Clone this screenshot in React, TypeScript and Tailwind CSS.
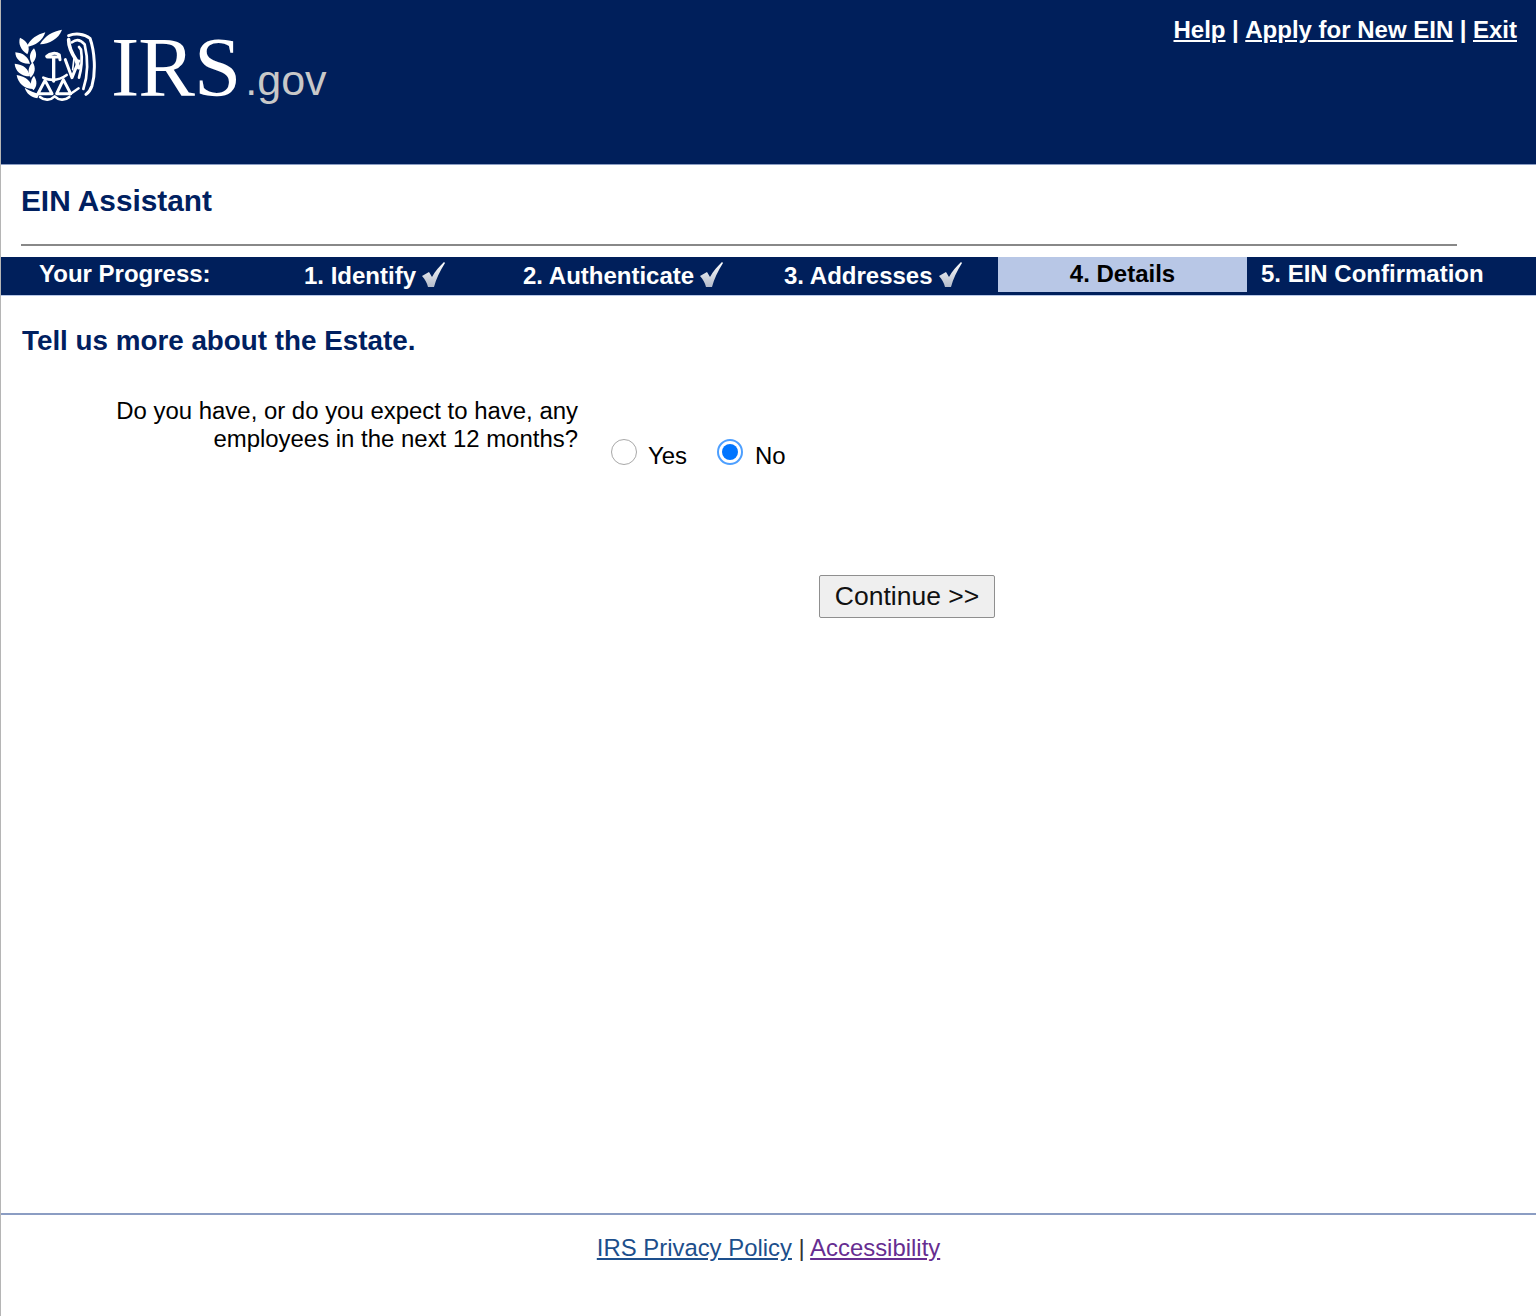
const arial = { fontFamily: '"Liberation Sans", Arial, sans-serif' } as const;

function Emblem() {
  return (
    <svg width="95" height="85" viewBox="0 0 285 255" fill="none" className="shrink-0 blur-[0.5px]">
      {/* wreath */}
      <g fill="#fff">
        <path d="M106 22 C82 28 60 42 50 66 C76 62 98 48 106 22Z" />
        <path d="M156 14 C130 18 104 32 90 58 C118 56 146 42 156 14Z" />
        <path d="M30 38 C24 56 32 74 52 88 C62 68 54 50 30 38Z" />
        <path d="M16 82 C16 102 32 118 60 116 C54 96 40 84 16 82Z" />
        <path d="M72 70 C58 84 56 100 66 116 C80 102 82 86 72 70Z" />
        <path d="M14 116 C16 138 32 154 60 154 C56 132 40 118 14 116Z" />
        <path d="M68 112 C54 126 52 142 62 158 C76 144 78 128 68 112Z" />
        <path d="M20 150 C24 174 42 192 70 192 C64 170 48 154 20 150Z" />
        <path d="M72 152 C60 166 60 182 70 196 C82 182 82 168 72 152Z" />
        <path d="M44 188 C50 206 62 216 82 220 L88 206 C74 204 60 198 44 188Z" />
      </g>
      {/* eagle */}
      <g stroke="#fff" strokeLinecap="round" strokeLinejoin="round">
        <path d="M176 32 C196 24 222 26 240 40 C254 80 258 140 246 182 C242 194 236 202 228 208" strokeWidth="9" />
        <path d="M186 52 C198 42 212 44 224 58 C234 100 234 150 220 192" strokeWidth="8" />
        <path d="M176 44 C176 66 186 86 198 104 L206 128" strokeWidth="11" />
        <path d="M207 66 L213 74 C217 100 215 130 207 158" strokeWidth="8" />
        <path d="M166 104 L186 158 L206 108" strokeWidth="9" />
        <path d="M192 100 L188 134" strokeWidth="5" />
        {/* head and scale beam */}
        <path d="M110 94 C120 84 138 82 148 90 L150 104 M112 96 L142 96" strokeWidth="9" />
        <path d="M131 98 L131 168" strokeWidth="10" />
        <path d="M100 158 C122 168 148 166 170 150" strokeWidth="8" />
        {/* pans */}
        <path d="M105 166 L84 206 L126 206 Z" strokeWidth="9" />
        <path d="M160 164 L140 206 L182 206 Z" strokeWidth="9" />
        <path d="M90 216 C104 228 122 226 134 214 C146 226 164 228 178 216" strokeWidth="8" />
        <path d="M180 208 L206 190" strokeWidth="7" />
      </g>
    </svg>
  );
}

function Check() {
  return (
    <svg width="24" height="25" viewBox="0 0 24 25" className="mt-[5px] shrink-0">
      <defs>
        <linearGradient id="check-fade" x1="0" y1="0" x2="0" y2="1">
          <stop offset="0" stopColor="#ffffff" />
          <stop offset="1" stopColor="#b4bbca" />
        </linearGradient>
      </defs>
      <path d="M0 14 L7 10 L10 15 C13 9 18 4 22 0 L23 1 C18 9 14 17 12 25 L6 25 C5 21 3 17 0 14Z" fill="url(#check-fade)" />
    </svg>
  );
}

function Step({ label, className }: { label: string; className: string }) {
  return (
    <div className={`flex items-start text-white ${className}`}>
      <span className="mt-[3px] mr-[6px] leading-[32px]">{label}</span>
      <Check />
    </div>
  );
}

export default function App() {
  return (
    <div className="flex min-h-[1316px] flex-col border-l border-[#b5b5b5] bg-white text-black" style={arial}>
      {/* ── Header ── */}
      <header className="flex h-[165px] shrink-0 items-start justify-between border-b border-[#8b9dc3] bg-[#001f5b] pr-[19px]">
        <div className="flex items-start pt-[25px] pl-[9px]">
          <Emblem />
          <span
            className="mt-[-6px] ml-[6px] text-[85px] leading-[96px] tracking-[-1px] text-white"
            style={{ fontFamily: '"Liberation Serif", "Times New Roman", serif' }}
          >
            IRS
          </span>
          <span className="mt-[31px] ml-[5px] text-[43px] leading-[48px] text-[#c8c8c8]">.gov</span>
        </div>
        <nav className="mt-[15px] flex gap-[6.5px] text-[24px] leading-[30px] font-bold text-white">
          <a href="#" className="underline">Help</a>
          <span>|</span>
          <a href="#" className="underline">Apply for New EIN</a>
          <span>|</span>
          <a href="#" className="underline">Exit</a>
        </nav>
      </header>

      {/* ── Title ── */}
      <div className="h-[92px] shrink-0 pt-[18px] pl-[20px]">
        <h1 className="text-[29.8px] leading-[35px] font-bold text-[#002060]">EIN Assistant</h1>
        <div className="mt-[26px] h-[2px] w-[1436px] bg-[#888888]" />
      </div>

      {/* ── Progress bar ── */}
      <div className="flex h-[39px] shrink-0 border-b border-[#b8c7e6] bg-[#001f5b] text-[24px] font-bold">
        <div className="w-[262px] pl-[38px] leading-[34px] text-white">Your Progress:</div>
        <Step label="1. Identify" className="ml-[41px] w-[219px]" />
        <Step label="2. Authenticate" className="w-[261px]" />
        <Step label="3. Addresses" className="w-[214px]" />
        <div className="mb-[3px] h-[35px] w-[249px] bg-[#b8c7e6] text-center leading-[34px] text-black">4. Details</div>
        <div className="pl-[14px] leading-[34px] whitespace-nowrap text-white">5. EIN Confirmation</div>
      </div>

      {/* ── Content ── */}
      <main className="flex-1 pl-[20px]">
        <h2 className="mt-[28px] ml-[1px] text-[27.8px] leading-[34px] font-bold text-[#002060]">Tell us more about the Estate.</h2>
        <div className="mt-[39px] flex items-start text-[23.95px] leading-[28px]">
          <p className="ml-[87px] w-[470px] text-right">
            Do you have, or do you expect to have, any employees in the next 12 months?
          </p>
          <div className="mt-[41px] ml-[33px] flex items-start">
            <span className="mt-[1px] size-[26px] rounded-full border border-[#a8a8a8] bg-white" />
            <span className="mt-[4px] ml-[11px]">Yes</span>
            <span className="mt-[1px] ml-[30px] flex size-[26px] items-center justify-center rounded-full border-2 border-[#4d9fff] bg-white">
              <span className="size-[16px] rounded-full bg-[#0075ff]" />
            </span>
            <span className="mt-[4px] ml-[12px]">No</span>
          </div>
        </div>
        <button className="mt-[105px] ml-[798px] flex h-[43px] w-[176px] items-center justify-center rounded-[2px] border border-[#8f8f8f] bg-[#efefef] text-[26.5px] leading-none text-[#111]">
          Continue &gt;&gt;
        </button>
      </main>

      {/* ── Footer ── */}
      <footer className="h-[103px] shrink-0 border-t-2 border-[#8b9dc3] pt-[19px] text-center text-[23.9px] leading-[28px] text-[#1d4f8c]">
        <a href="#" className="underline">IRS Privacy Policy</a>
        <span className="text-[#333]"> | </span>
        <a href="#" className="text-[#662d91] underline">Accessibility</a>
      </footer>
    </div>
  );
}
